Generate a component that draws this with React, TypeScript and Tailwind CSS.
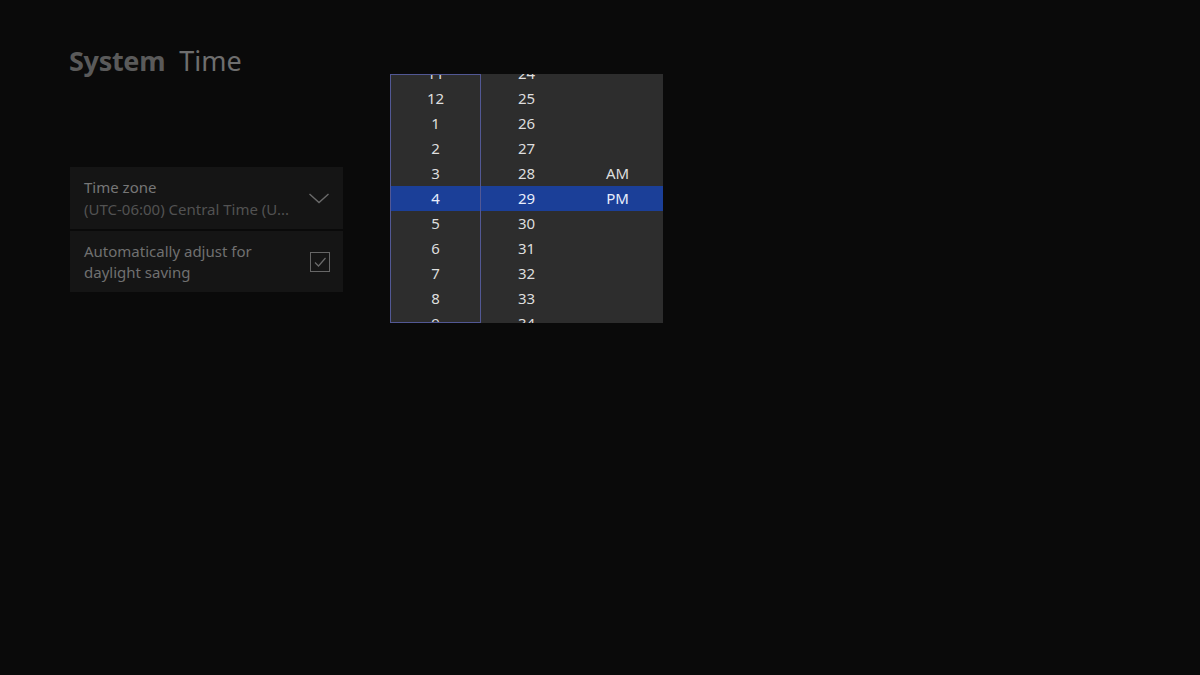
import React from "react";

const hours = ["11", "12", "1", "2", "3", "4", "5", "6", "7", "8", "9"];
const mins = ["24", "25", "26", "27", "28", "29", "30", "31", "32", "33", "34"];
const ampm = ["", "", "", "", "AM", "PM", "", "", "", "", ""];
const SEL = 5;

function Column({ items, bordered }: { items: string[]; bordered?: boolean }) {
  return (
    <div className="relative w-[91px] h-full overflow-hidden">
      <div className="-mt-[13.5px] flex flex-col">
        {items.map((t, i) => (
          <div
            key={i}
            className={
              "h-[25px] flex items-center justify-center text-[15px] leading-none " +
              (i === SEL ? "bg-[#1b3f98] text-[#e8eefc]" : "text-[#dedede]")
            }
          >
            {t}
          </div>
        ))}
      </div>
      {bordered && <div className="absolute inset-0 border border-[#525894] pointer-events-none" />}
    </div>
  );
}

export default function App() {
  return (
    <div
      className="w-[1200px] h-[675px] bg-[#0a0a0a] overflow-hidden relative"
      style={{ fontFamily: '"Noto Sans", "Open Sans", sans-serif' }}
    >
      <div className="flex">
        <div className="w-[390px] shrink-0 pl-[69px] pt-[47px]">
          <div className="flex items-baseline gap-[14px] text-[27px] leading-none">
            <span className="font-bold text-[#5a5a5a] tracking-[-0.3px]">System</span>
            <span className="text-[#6e6e6e]">Time</span>
          </div>
          <div className="mt-[93px] w-[273px] flex flex-col gap-[2px] ml-[1px]">
            <div className="h-[62px] bg-[#151515] flex items-center pl-[14px] pr-[12px]">
              <div className="flex-1 flex flex-col gap-[1px]">
                <span className="text-[15px] leading-[21px] text-[#777777]">Time zone</span>
                <span className="text-[15px] leading-[21px] text-[#525252]">(UTC-06:00) Central Time (U...</span>
              </div>
              <svg width="22" height="14" viewBox="0 0 22 14" className="mr-[1px]">
                <path d="M1.5 3 L11 11.5 L20.5 3" fill="none" stroke="#6a6a6a" strokeWidth="1.4" />
              </svg>
            </div>
            <div className="h-[61px] bg-[#151515] flex items-center pl-[14px] pr-[13px]">
              <div className="flex-1 flex flex-col">
                <span className="text-[15px] leading-[21px] text-[#707070]">Automatically adjust for</span>
                <span className="text-[15px] leading-[21px] text-[#707070]">daylight saving</span>
              </div>
              <div className="w-[20px] h-[20px] border border-[#666666] flex items-center justify-center">
                <svg width="14" height="12" viewBox="0 0 14 12">
                  <path d="M2 6.5 L5.5 10 L12.5 2" fill="none" stroke="#6a6a6a" strokeWidth="1.2" />
                </svg>
              </div>
            </div>
          </div>
        </div>
        <div className="mt-[74px] h-[249px] w-[273px] bg-[#2d2d2d] flex">
          <Column items={hours} bordered />
          <Column items={mins} />
          <Column items={ampm} />
        </div>
      </div>
    </div>
  );
}
